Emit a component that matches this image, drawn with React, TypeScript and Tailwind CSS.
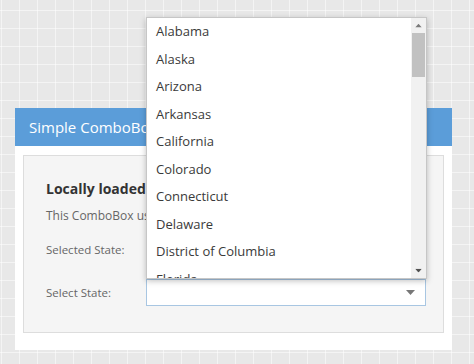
import { useState } from "react";

const STATES = [
	"Alabama",
	"Alaska",
	"Arizona",
	"Arkansas",
	"California",
	"Colorado",
	"Connecticut",
	"Delaware",
	"District of Columbia",
	"Florida",
	"Georgia",
];

function Caret({ className }: { className?: string }) {
	return (
		<svg width="9" height="5" viewBox="0 0 9 5" className={className}>
			<path d="M0 0h9L4.5 5z" fill="currentColor" />
		</svg>
	);
}

function StateList() {
	return (
		<div className="absolute left-[146px] top-[17px] flex h-[262px] w-[281px] border border-[#c6c6c6] bg-white shadow-[0_2px_6px_rgba(0,0,0,0.25)]">
			<ul className="flex-1 overflow-hidden">
				{STATES.map((s) => (
					<li key={s} className="flex h-[27.5px] items-center pl-[9px] text-[13px] text-[#3a3a3a]">
						{s}
					</li>
				))}
			</ul>
			{/* fake scrollbar */}
			<div className="flex w-[15px] flex-col items-center bg-[#f1f1f1]">
				<div className="flex h-[15px] items-center justify-center text-[#7a7a7a]">
					<Caret className="rotate-180 scale-75" />
				</div>
				<div className="h-[44px] w-[13px] bg-[#c1c1c1]" />
				<div className="flex-1" />
				<div className="flex h-[15px] items-center justify-center text-[#505050]">
					<Caret className="scale-75" />
				</div>
			</div>
		</div>
	);
}

export default function App() {
	const [selected] = useState("");
	return (
		<div
			className="relative h-[364px] w-[474px] overflow-hidden bg-[#e8e8e8] bg-[linear-gradient(to_right,rgba(255,255,255,0.5)_1px,transparent_1px),linear-gradient(to_bottom,rgba(255,255,255,0.5)_1px,transparent_1px)] bg-[size:18px_18px] bg-[position:1px_10px] pt-[108px] pl-[15px]"
			style={{ fontFamily: "'Open Sans', 'Noto Sans', sans-serif" }}
		>
			<div className="w-[437px] bg-white pb-[17px]">
				<div className="flex h-[38px] items-center bg-[#5b9dd9] pl-[14px] text-[15px] text-white">Simple ComboBox</div>
				<div className="mx-[8px] mt-[9px] h-[178px] border border-[#dddddd] bg-[#f5f5f5] px-[22px] pt-[22px]">
					<h3 className="text-[14px] font-bold text-[#333]">Locally loaded data</h3>
					<p className="mt-[8px] text-[12px] text-[#666]">This ComboBox uses a local store of states.</p>
					<div className="mt-[14px] flex h-[22px] items-center text-[11.5px] text-[#666]">
						<span className="w-[100px] shrink-0">Selected State:</span>
						<span>{selected}</span>
					</div>
					<div className="mt-[18px] flex items-center text-[11.5px] text-[#666]">
						<span className="w-[100px] shrink-0">Select State:</span>
						<div className="flex h-[27px] w-[280px] shrink-0 items-center justify-end border border-[#a8c6e2] bg-white pr-[10px] text-[#777]">
							<Caret />
						</div>
					</div>
				</div>
			</div>
			<StateList />
		</div>
	);
}
